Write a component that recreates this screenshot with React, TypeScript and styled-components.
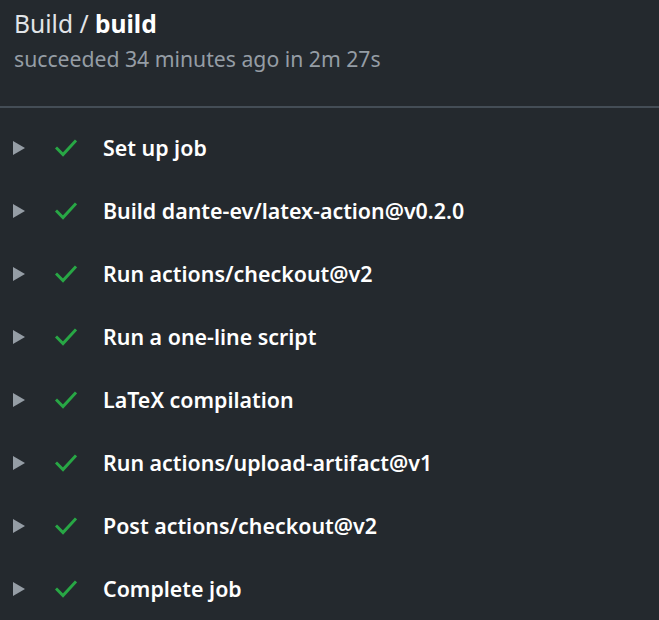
import React from "react";
import styled, { createGlobalStyle } from "styled-components";

const GlobalStyle = createGlobalStyle`
  html, body {
    margin: 0;
    padding: 0;
    background: #24292e;
  }
  body {
    font-family: "Noto Sans", "Open Sans", sans-serif;
    -webkit-font-smoothing: antialiased;
  }
`;

const Page = styled.div`
  width: 659px;
  height: 620px;
  background: #24292e;
  overflow: hidden;
`;

const Header = styled.header`
  padding: 7px 14px 0;
  height: 108px;
  box-sizing: border-box;
  border-bottom: 2px solid #444d56;
`;

const Title = styled.h1`
  margin: 0;
  font-size: 24.6px;
  line-height: 34px;
  font-weight: 400;
  color: #e1e4e8;
  strong {
    font-weight: 700;
    color: #fff;
  }
`;

const Subtitle = styled.div`
  margin-top: 4px;
  font-size: 21.2px;
  line-height: 28px;
  color: #959da5;
`;

const Steps = styled.ul`
  list-style: none;
  margin: 0;
  padding: 8px 0 0;
`;

const Step = styled.li`
  display: flex;
  align-items: center;
  height: 63px;
  padding-left: 13px;
`;

const Caret = styled.span`
  width: 0;
  height: 0;
  border-top: 7px solid transparent;
  border-bottom: 7px solid transparent;
  border-left: 12px solid #959da5;
  margin-right: 30px;
`;

const Check = styled.svg`
  width: 22px;
  height: 18px;
  margin-right: 26px;
  flex-shrink: 0;
`;

const Name = styled.span`
  font-size: 21.4px;
  font-weight: 600;
  color: #ffffff;
`;

const steps = [
  "Set up job",
  "Build dante-ev/latex-action@v0.2.0",
  "Run actions/checkout@v2",
  "Run a one-line script",
  "LaTeX compilation",
  "Run actions/upload-artifact@v1",
  "Post actions/checkout@v2",
  "Complete job",
];

export default function App() {
  return (
    <Page>
      <GlobalStyle />
      <Header>
        <Title>
          Build / <strong>build</strong>
        </Title>
        <Subtitle>succeeded 34 minutes ago in 2m 27s</Subtitle>
      </Header>
      <Steps>
        {steps.map((s) => (
          <Step key={s}>
            <Caret />
            <Check viewBox="0 0 22 18">
              <path d="M2 9.5 L8 15.5 L20 2.5" fill="none" stroke="#28a745" strokeWidth="3" strokeLinecap="square" />
            </Check>
            <Name>{s}</Name>
          </Step>
        ))}
      </Steps>
    </Page>
  );
}
